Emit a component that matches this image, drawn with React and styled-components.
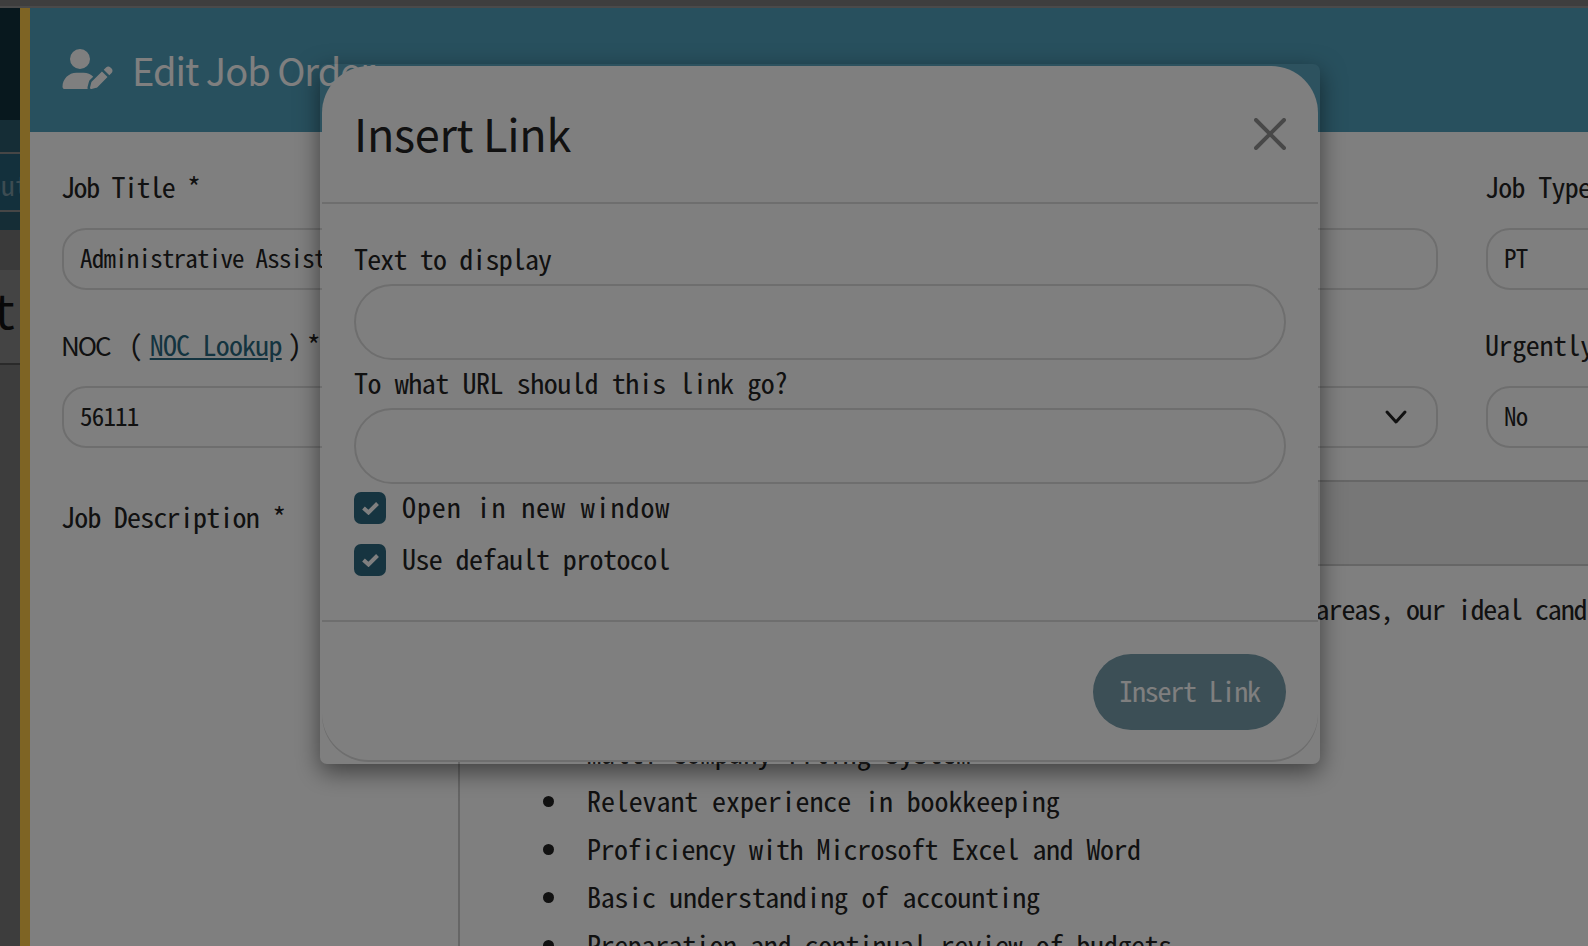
import React from 'react';
import styled, { createGlobalStyle } from 'styled-components';
import { FaUserPen } from 'react-icons/fa6';

const MONO = '"Noto Sans Mono CJK KR", "Noto Sans CJK KR", monospace';
const SANS = '"Noto Sans CJK KR", "Noto Sans", sans-serif';

const Global = createGlobalStyle`
  html, body { margin: 0; padding: 0; height: 100%; overflow: hidden; background: #fff; }
  * { box-sizing: border-box; }
  body { font-family: ${MONO}; color: #222; }
`;

const Page = styled.div`
  position: relative;
  width: 1588px;
  height: 946px;
  overflow: hidden;
  display: flex;
  flex-direction: column;
`;
const TopBar = styled.div`
  flex: 0 0 8px;
  background: #7c7c7c;
  border-bottom: 2px solid #949494;
`;
const Main = styled.div`
  flex: 1;
  display: flex;
  min-height: 0;
`;
const Sidebar = styled.nav`
  flex: 0 0 20px;
  display: flex;
  flex-direction: column;
  background: #7a7a7a;
  overflow: hidden;
`;
const SideBrand = styled.div`
  flex: 0 0 112px;
  background: #10303c;
`;
const SideGroup = styled.div`
  flex: 0 0 110px;
  background: #2a5a6c;
  display: flex;
  flex-direction: column;
  padding: 32px 0 18px;
`;
const SideLink = styled.div`
  height: 60px;
  border-top: 2px solid #8c8c8c;
  border-bottom: 2px solid #8c8c8c;
  background: #266078;
  color: #7a98a4;
  font-size: 28px;
  line-height: 60px;
  display: flex;
  justify-content: flex-end;
  white-space: nowrap;
  margin-right: -9px;
`;
const SideGap = styled.div`
  flex: 0 0 40px;
  background: #747474;
`;
const SideHeading = styled.div`
  flex: 0 0 95px;
  background: #888;
  border-bottom: 2px solid #555;
  color: #111;
  font-size: 48px;
  line-height: 76px;
  display: flex;
  justify-content: flex-end;
  padding-right: 4px;
  white-space: nowrap;
`;
const GoldStripe = styled.div`
  flex: 0 0 10px;
  background: #fcc848;
`;
const Content = styled.main`
  flex: 1;
  min-width: 0;
  overflow: hidden;
  background: #fff;
`;
const PageHeader = styled.header`
  height: 124px;
  background: #50a0bc;
  color: #fff;
  display: flex;
  align-items: center;
  gap: 19px;
  padding: 0 32px;
  svg { width: 51px; height: 40px; margin-top: -2px; }
`;
const PageTitle = styled.h1`
  margin: 0;
  font: 400 38px/1 ${SANS};
  letter-spacing: -1px;
  white-space: nowrap;
`;
const Form = styled.div`
  padding: 36px 0 0 32px;
  width: 1900px;
`;
const FormRow = styled.div`
  display: grid;
  grid-template-columns: 1376px 300px;
  column-gap: 48px;
  margin-bottom: 36px;
`;
const Field = styled.div`
  min-width: 0;
`;
const Label = styled.label`
  display: flex;
  align-items: baseline;
  height: 40px;
  line-height: 36px;
  margin: 0 0 20px -1px;
  font-size: 28px;
  letter-spacing: ${p => p.$track ?? -1.4}px;
  white-space: pre;
  color: #222;
`;
const NocWord = styled.span`
  font-family: ${SANS};
  font-size: 26px;
  letter-spacing: -2px;
`;
const Paren = styled.span`
  margin-left: ${p => p.$left}px;
  letter-spacing: 0;
`;
const NocLink = styled.a`
  color: #286880;
  text-decoration: underline;
  margin-left: 7px;
  letter-spacing: -0.8px;
`;
const Input = styled.div`
  position: relative;
  height: 62px;
  border: 2px solid #ddd;
  border-radius: 24px;
  padding: 0 16px;
  font-size: 25px;
  line-height: 55px;
  letter-spacing: -0.8px;
  color: #222;
  white-space: nowrap;
  background: #fff;
`;
const Chevron = styled.svg`
  position: absolute;
  right: 28px;
  top: 21px;
  width: 24px;
  height: 16px;
  fill: none;
  stroke: #222;
  stroke-width: 3;
  stroke-linecap: round;
  stroke-linejoin: round;
`;
const DescRow = styled.div`
  display: grid;
  grid-template-columns: 396px 1fr;
  margin-top: -4px;
`;
const DescLabel = styled(Label)`
  margin-top: 18px;
`;
const Editor = styled.div`
  border-left: 2px solid #ccc;
  border-top: 2px solid #ccc;
  height: 600px;
`;
const EditorBar = styled.div`
  height: 84px;
  background: #eee;
  border-bottom: 2px solid #ccc;
`;
const EditorBody = styled.div`
  padding: 22px 30px;
  font-size: 28px;
  line-height: 40px;
  white-space: nowrap;
  color: #222;
`;
const Lead = styled.p`
  margin: 0 0 4px;
  letter-spacing: -1.1px;
`;
const List = styled.ul`
  margin: 0;
  padding: 0 0 0 97px;
  list-style: none;
`;
const Item = styled.li`
  display: flex;
  align-items: center;
  height: 48px;
  margin-left: -44px;
  letter-spacing: ${p => p.$track ?? 0}px;
  &::before {
    content: '';
    flex: 0 0 11px;
    height: 11px;
    margin: 2px 33px 0 0;
    border-radius: 50%;
    background: #222;
  }
`;

const Shell = styled.div`
  position: absolute;
  z-index: 1;
  left: 320px;
  top: 64px;
  width: 1000px;
  height: 700px;
  padding: 2px;
  border-radius: 7px;
  background: rgba(255, 255, 255, 0.06);
  box-shadow: 0 8px 24px rgba(0, 0, 0, 0.5);
`;
const Dialog = styled.div`
  height: 100%;
  background: #fff;
  border-radius: 47px;
  box-shadow: inset 0 -2px 0 #dcdcdc;
  display: flex;
  flex-direction: column;
  color: #222;
`;
const DialogHeader = styled.div`
  flex: 0 0 138px;
  border-bottom: 2px solid #ddd;
  padding: 0 32px;
  display: flex;
  align-items: center;
  justify-content: space-between;
`;
const DialogTitle = styled.h2`
  margin: -4px 0 0;
  font: 400 45px/1 ${SANS};
  letter-spacing: -0.3px;
  color: #222;
`;
const CloseIcon = styled.svg`
  width: 32px;
  height: 32px;
  stroke: #919191;
  stroke-width: 4;
  stroke-linecap: round;
`;
const DialogBody = styled.div`
  flex: 1;
  padding: 32px 32px 0;
`;
const ModalLabel = styled.label`
  display: block;
  height: 48px;
  line-height: 44px;
  font-size: 28px;
  letter-spacing: ${p => p.$track}px;
  white-space: nowrap;
`;
const ModalInput = styled.div`
  height: 76px;
  border: 2px solid #ddd;
  border-radius: 38px;
  background: #fff;
`;
const CheckRow = styled.div`
  display: flex;
  align-items: center;
  gap: 16px;
  height: 32px;
  margin-top: ${p => p.$top}px;
  font-size: 28px;
  letter-spacing: ${p => p.$track}px;
  white-space: nowrap;
`;
const CheckText = styled.span`
  margin-top: -5px;
`;
const CheckBox = styled.span`
  flex: 0 0 32px;
  height: 32px;
  border-radius: 7px;
  background: #2c6880;
  display: flex;
  align-items: center;
  justify-content: center;
`;
const CheckMark = styled.svg`
  width: 17px;
  height: 14px;
  fill: none;
  stroke: #fff;
  stroke-width: 4;
`;
const DialogFooter = styled.div`
  flex: 0 0 142px;
  border-top: 2px solid #ddd;
  padding: 32px 32px 0;
  display: flex;
  justify-content: flex-end;
  align-items: flex-start;
`;
const PrimaryButton = styled.button`
  width: 193px;
  height: 76px;
  border: 0;
  border-radius: 38px;
  background: #789eac;
  color: #fff;
  font-family: ${MONO};
  font-size: 28px;
  letter-spacing: -1.2px;
  padding: 0 0 4px;
`;
const Overlay = styled.div`
  position: absolute;
  z-index: 2;
  inset: 0;
  background: rgba(0, 0, 0, 0.5);
`;

const Tick = () => (
  <CheckBox>
    <CheckMark viewBox="0 0 17 14"><polyline points="1.5,7 6.5,11.5 15.5,2.5" /></CheckMark>
  </CheckBox>
);

export default function App() {
  return (
    <Page>
      <Global />
      <TopBar />
      <Main>
        <Sidebar>
          <SideBrand />
          <SideGroup><SideLink>Logout</SideLink></SideGroup>
          <SideGap />
          <SideHeading>Client</SideHeading>
        </Sidebar>
        <GoldStripe />
        <Content>
          <PageHeader>
            <FaUserPen />
            <PageTitle>Edit Job Order</PageTitle>
          </PageHeader>
          <Form>
            <FormRow>
              <Field>
                <Label>Job Title *</Label>
                <Input>Administrative Assistant</Input>
              </Field>
              <Field>
                <Label $track={-0.7}>Job Type</Label>
                <Input>PT</Input>
              </Field>
            </FormRow>
            <FormRow>
              <Field>
                <Label $track={0}>
                  <NocWord>NOC</NocWord>
                  <Paren $left={19}>(</Paren>
                  <NocLink>NOC Lookup</NocLink>
                  <Paren $left={6}>)</Paren>
                  <Paren $left={5}>*</Paren>
                </Label>
                <Input>56111<Chevron viewBox="0 0 24 16"><polyline points="3,3 12,13 21,3" /></Chevron></Input>
              </Field>
              <Field>
                <Label $track={-0.4}>Urgently</Label>
                <Input>No</Input>
              </Field>
            </FormRow>
            <DescRow>
              <DescLabel $track={-0.8}>Job Description *</DescLabel>
              <Editor>
                <EditorBar />
                <EditorBody>
                  <Lead>In addition to general office duties in numerous administrative areas, our ideal candidate will bring</Lead>
                  <List>
                    <Item>Experience with records management</Item>
                    <Item>Experience with scheduling</Item>
                    <Item $track={0.2}>multi company filing system</Item>
                    <Item $track={-0.1}>Relevant experience in bookkeeping</Item>
                    <Item $track={-0.5}>Proficiency with Microsoft Excel and Word</Item>
                    <Item $track={-0.28}>Basic understanding of accounting</Item>
                    <Item $track={-0.4}>Preparation and continual review of budgets</Item>
                  </List>
                </EditorBody>
              </Editor>
            </DescRow>
          </Form>
        </Content>
      </Main>
      <Shell>
        <Dialog>
          <DialogHeader>
            <DialogTitle>Insert Link</DialogTitle>
            <CloseIcon viewBox="0 0 32 32"><path d="M2 2 L30 30 M30 2 L2 30" /></CloseIcon>
          </DialogHeader>
          <DialogBody>
            <ModalLabel $track={-0.85}>Text to display</ModalLabel>
            <ModalInput />
            <ModalLabel $track={-0.44}>To what URL should this link go?</ModalLabel>
            <ModalInput />
            <CheckRow $top={8} $track={0.9}><Tick /><CheckText>Open in new window</CheckText></CheckRow>
            <CheckRow $top={20} $track={-0.6}><Tick /><CheckText>Use default protocol</CheckText></CheckRow>
          </DialogBody>
          <DialogFooter>
            <PrimaryButton>Insert Link</PrimaryButton>
          </DialogFooter>
        </Dialog>
      </Shell>
      <Overlay />
    </Page>
  );
}
